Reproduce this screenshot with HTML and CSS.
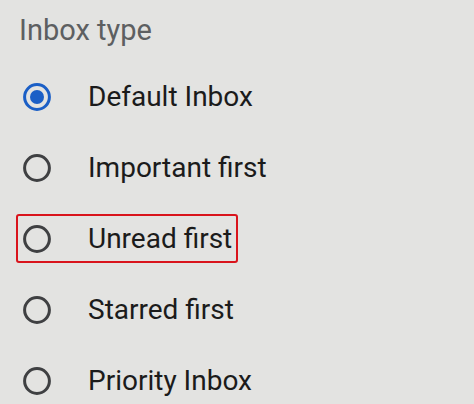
FILE: index.html
```html
<!DOCTYPE html>
<html>
<head>
<meta charset="utf-8">
<link rel="stylesheet" href="styles.css">
</head>
<body>
<div class="panel">
  <div class="heading">Inbox type</div>
  <div class="options">
    <div class="row">
      <svg class="radio" viewBox="0 0 28 28" width="28" height="28"><circle cx="14" cy="14" r="12.4" fill="none" stroke="#1b5fc6" stroke-width="3"/><circle cx="14" cy="14" r="7" fill="#1b5fc6"/></svg>
      <span class="label">Default Inbox</span>
    </div>
    <div class="row">
      <svg class="radio" viewBox="0 0 28 28" width="28" height="28"><circle cx="14" cy="14" r="12.4" fill="none" stroke="#3f4042" stroke-width="3"/></svg>
      <span class="label">Important first</span>
    </div>
    <div class="row highlighted">
      <svg class="radio" viewBox="0 0 28 28" width="28" height="28"><circle cx="14" cy="14" r="12.4" fill="none" stroke="#3f4042" stroke-width="3"/></svg>
      <span class="label">Unread first</span>
      <div class="highlight"></div>
    </div>
    <div class="row">
      <svg class="radio" viewBox="0 0 28 28" width="28" height="28"><circle cx="14" cy="14" r="12.4" fill="none" stroke="#3f4042" stroke-width="3"/></svg>
      <span class="label">Starred first</span>
    </div>
    <div class="row">
      <svg class="radio" viewBox="0 0 28 28" width="28" height="28"><circle cx="14" cy="14" r="12.4" fill="none" stroke="#3f4042" stroke-width="3"/></svg>
      <span class="label">Priority Inbox</span>
    </div>
  </div>
</div>
</body>
</html>
```
FILE: styles.css
```css
html, body {
  margin: 0;
  padding: 0;
  background: #e3e3e1;
}
body {
  width: 474px;
  height: 404px;
  overflow: hidden;
  font-family: Roboto, "Noto Sans", sans-serif;
}
.panel {
  padding: 14px 0 0 18px;
}
.heading {
  margin-left: 1px;
  font-size: 29px;
  line-height: 33px;
  color: #5d5f61;
  margin-bottom: 14px;
}
.options {
  display: flex;
  flex-direction: column;
}
.row {
  position: relative;
  display: flex;
  align-items: center;
  height: 71px;
}
.radio {
  display: block;
  margin-left: 5px;
  flex: none;
}
.label {
  margin-left: 37px;
  font-size: 28px;
  line-height: 33px;
  color: #1b1b1b;
}
.highlight {
  position: absolute;
  left: -2px;
  top: 11px;
  width: 218px;
  height: 45px;
  border: 2px solid #d9141c;
  border-radius: 3px;
  pointer-events: none;
}
```
